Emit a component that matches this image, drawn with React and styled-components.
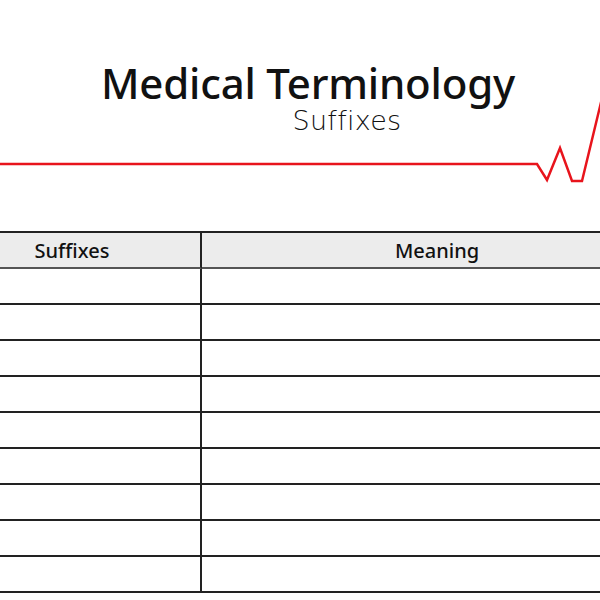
import React from "react";
import styled, { createGlobalStyle } from "styled-components";

const GlobalStyle = createGlobalStyle`
  html, body {
    margin: 0;
    padding: 0;
    background: #fff;
    overflow: hidden;
  }
  body {
    font-family: "Noto Sans", "DejaVu Sans", sans-serif;
  }
`;

const Page = styled.div`
  width: 600px;
  height: 600px;
  overflow: hidden;
  position: relative;
`;

const Header = styled.header`
  position: relative;
  height: 231px;
  display: flex;
  flex-direction: column;
  align-items: center;
`;

const Title = styled.h1`
  margin: 61px 0 0 16px;
  font-family: "Noto Sans", sans-serif;
  font-weight: 500;
  font-size: 42px;
  letter-spacing: -0.2px;
  line-height: 44px;
  color: #111;
`;

const Subtitle = styled.div`
  margin: 2px 0 0 94px;
  font-family: "DejaVu Sans", sans-serif;
  font-weight: 300;
  font-size: 27px;
  line-height: 28px;
  color: #111;
  letter-spacing: 0.3px;
`;

const Pulse = styled.svg`
  position: absolute;
  left: 0;
  top: 0;
  width: 600px;
  height: 231px;
  pointer-events: none;
`;

const Table = styled.div`
  margin-left: -56px;
  width: 728px;
  display: grid;
  grid-template-columns: 258px 1fr;
  border-top: 2px solid #222;
`;

const Cell = styled.div`
  height: 34px;
  border-bottom: 2px solid ${(p) => (p.head ? "#555" : "#222")};
  border-right: ${(p) => (p.first ? "2px solid #222" : "none")};
  background: ${(p) => (p.head ? "#ececec" : "#fff")};
  display: flex;
  align-items: center;
  justify-content: center;
  font-size: 20px;
  font-weight: 500;
  color: #111;
`;

const rows = Array.from({ length: 9 });

export default function App() {
  return (
    <Page>
      <GlobalStyle />
      <Header>
        <Pulse viewBox="0 0 600 231">
          <polyline
            points="0,164 537,164 547,180 560,148 572,181 582,181 604,90"
            fill="none"
            stroke="#e8141c"
            strokeWidth="2.5"
            strokeLinejoin="miter"
          />
        </Pulse>
        <Title>Medical Terminology</Title>
        <Subtitle>Suffixes</Subtitle>
      </Header>
      <Table>
        <Cell head first>Suffixes</Cell>
        <Cell head>Meaning</Cell>
        {rows.map((_, i) => (
          <React.Fragment key={i}>
            <Cell first />
            <Cell />
          </React.Fragment>
        ))}
      </Table>
    </Page>
  );
}
